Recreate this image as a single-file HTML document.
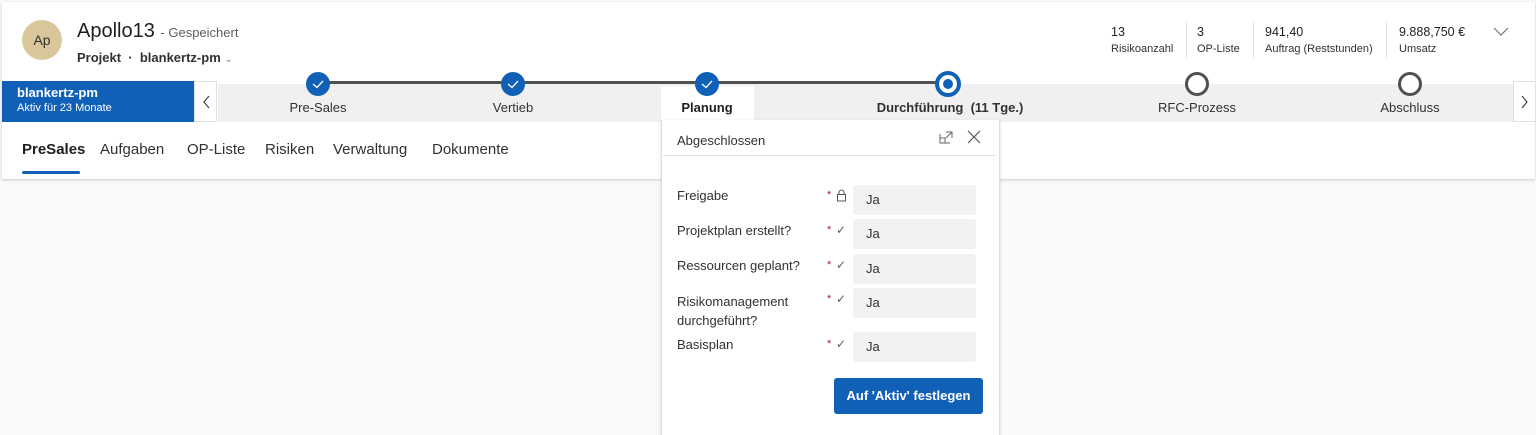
<html><head><style>
html,body{margin:0;width:1536px;height:435px;overflow:hidden}
body{background:#fafafa;font-family:"Liberation Sans",sans-serif;position:relative;color:#323130}
.a{position:absolute}
.card{left:2px;top:2px;width:1533px;height:177px;background:#fff;box-shadow:0 1px 3px rgba(0,0,0,.2)}
.lbl{font-size:13px;color:#323130;top:100px;transform:translateX(-50%);white-space:nowrap}
.c{width:20px;height:20px;border-radius:50%;top:72px;transform:translateX(-50%)}
.done{background:#1160b7;border:2px solid #1160b7;width:20px;height:20px}
.todo{background:#fff;border:3px solid #505050;width:18px;height:18px}
.tab{top:141px;font-size:15px;color:#323130}
.st{top:24px;font-size:11px;line-height:17px;white-space:nowrap}
.st b{font-weight:normal;font-size:12.5px;color:#201f1e}
.sep{top:22px;width:1px;height:36px;background:#e1e1e1}
.fl{left:677px;font-size:13px;color:#323130}
.in{left:853px;width:123px;height:30px;background:#f3f2f1;border-radius:3px;font-size:13px;line-height:30px;text-indent:13px}
.star{left:827px;color:#a4262c;font-size:11px}
.ck{left:836px;font-size:12px;color:#605e5c}
</style></head><body>
<div class="a card"></div>
<div class="a" style="left:22px;top:20px;width:40px;height:40px;border-radius:50%;background:#d9c69a;font-size:14px;line-height:40px;text-align:center;color:#323130">Ap</div>
<div class="a" style="left:77px;top:20px;font-size:20px;color:#201f1e">Apollo13 <span style="font-size:13px;color:#605e5c">- Gespeichert</span></div>
<div class="a" style="left:77px;top:50px;font-size:13px;font-weight:bold;color:#323130">Projekt &nbsp;·&nbsp; blankertz-pm <span style="font-weight:normal;color:#888;font-size:10px">&#8964;</span></div>

<div class="a st" style="left:1111px"><b>13</b><br>Risikoanzahl</div>
<div class="a sep" style="left:1186px"></div>
<div class="a st" style="left:1197px"><b>3</b><br>OP-Liste</div>
<div class="a sep" style="left:1253px"></div>
<div class="a st" style="left:1265px"><b>941,40</b><br>Auftrag (Reststunden)</div>
<div class="a sep" style="left:1386px"></div>
<div class="a st" style="left:1399px"><b>9.888,750 €</b><br>Umsatz</div>
<svg class="a" style="left:1493px;top:27px" width="16" height="10"><path d="M1 1 L8 8 L15 1" fill="none" stroke="#777" stroke-width="1.2"/></svg>

<div class="a" style="left:218px;top:84px;width:1295px;height:38px;background:#f0f0f0"></div>
<div class="a" style="left:661px;top:86px;width:93px;height:36px;background:#fff"></div>
<div class="a" style="left:2px;top:81px;width:192px;height:41px;background:#1160b7;color:#fff"><div style="padding:4px 0 0 15px;font-size:13px;font-weight:bold">blankertz-pm</div><div style="padding:2px 0 0 15px;font-size:11px">Aktiv für 23 Monate</div></div>
<div class="a" style="left:194px;top:81px;width:23px;height:41px;background:#fff;border:1px solid #e1e1e1;box-sizing:border-box"><svg width="23" height="41"><path d="M14 14 L9 20 L14 26" fill="none" stroke="#444" stroke-width="1.2"/></svg></div>
<div class="a" style="left:1513px;top:81px;width:23px;height:41px;background:#fff;border:1px solid #e1e1e1;box-sizing:border-box"><svg width="23" height="41"><path d="M8 14 L13 20 L8 26" fill="none" stroke="#444" stroke-width="1.2"/></svg></div>
<div class="a" style="left:318px;top:81px;width:630px;height:3px;background:#505050"></div>

<div class="a c done" style="left:318px"><svg width="20" height="20"><path d="M5 10 L9 13.5 L15 7" fill="none" stroke="#fff" stroke-width="1.3"/></svg></div>
<div class="a c done" style="left:513px"><svg width="20" height="20"><path d="M5 10 L9 13.5 L15 7" fill="none" stroke="#fff" stroke-width="1.3"/></svg></div>
<div class="a c done" style="left:707px"><svg width="20" height="20"><path d="M5 10 L9 13.5 L15 7" fill="none" stroke="#fff" stroke-width="1.3"/></svg></div>
<div class="a c" style="left:948px;width:18px;height:18px;background:#fff;border:4px solid #1160b7;top:71px"><div style="margin:4px;width:10px;height:10px;border-radius:50%;background:#1160b7"></div></div>
<div class="a c todo" style="left:1197px"></div>
<div class="a c todo" style="left:1410px"></div>

<div class="a lbl" style="left:318px">Pre-Sales</div>
<div class="a lbl" style="left:513px">Vertieb</div>
<div class="a lbl" style="left:707px;font-weight:bold;color:#201f1e">Planung</div>
<div class="a lbl" style="left:950px;font-weight:bold;color:#323130">Durchführung &nbsp;(11 Tge.)</div>
<div class="a lbl" style="left:1197px">RFC-Prozess</div>
<div class="a lbl" style="left:1410px">Abschluss</div>

<div class="a tab" style="left:22px;font-weight:bold;color:#201f1e">PreSales</div>
<div class="a" style="left:22px;top:171px;width:58px;height:3px;background:#1160b7;border-radius:2px"></div>
<div class="a tab" style="left:100px">Aufgaben</div>
<div class="a tab" style="left:187px">OP-Liste</div>
<div class="a tab" style="left:265px">Risiken</div>
<div class="a tab" style="left:333px">Verwaltung</div>
<div class="a tab" style="left:432px">Dokumente</div>

<div class="a" style="left:661px;top:120px;width:337px;height:320px;background:#fff;border-left:1px solid #ddd;border-right:1px solid #ddd;box-shadow:0 1px 3px rgba(0,0,0,.15)"></div>
<div class="a" style="left:663px;top:155px;width:333px;height:1px;background:#e1e1e1"></div>
<div class="a" style="left:677px;top:133px;font-size:13px">Abgeschlossen</div>
<svg class="a" style="left:938px;top:130px" width="16" height="15"><path d="M2 4 V13 H12 M2 8 H7 V13 M8 2 H14 V8 M14 2 L8 8" fill="none" stroke="#666" stroke-width="1"/></svg>
<svg class="a" style="left:967px;top:130px" width="14" height="14"><path d="M1 1 L13 13 M13 1 L1 13" fill="none" stroke="#555" stroke-width="1.2"/></svg>

<div class="a fl" style="top:188px">Freigabe</div>
<div class="a star" style="top:189px">*</div>
<svg class="a" style="left:836px;top:189px" width="11" height="13"><rect x="1.5" y="5.5" width="8" height="6.5" fill="none" stroke="#555"/><path d="M3 5.5 V3.5 A2.5 2.5 0 0 1 8 3.5 V5.5" fill="none" stroke="#555"/></svg>
<div class="a in" style="top:185px">Ja</div>

<div class="a fl" style="top:223px">Projektplan erstellt?</div>
<div class="a star" style="top:224px">*</div><div class="a ck" style="top:223px">✓</div>
<div class="a in" style="top:219px">Ja</div>

<div class="a fl" style="top:258px">Ressourcen geplant?</div>
<div class="a star" style="top:259px">*</div><div class="a ck" style="top:258px">✓</div>
<div class="a in" style="top:254px">Ja</div>

<div class="a fl" style="top:292px;line-height:19px">Risikomanagement<br>durchgeführt?</div>
<div class="a star" style="top:293px">*</div><div class="a ck" style="top:292px">✓</div>
<div class="a in" style="top:288px">Ja</div>

<div class="a fl" style="top:337px">Basisplan</div>
<div class="a star" style="top:338px">*</div><div class="a ck" style="top:337px">✓</div>
<div class="a in" style="top:332px">Ja</div>

<div class="a" style="left:834px;top:378px;width:149px;height:36px;background:#1160b7;border-radius:3px;color:#fff;font-size:13px;font-weight:bold;line-height:36px;text-align:center">Auf 'Aktiv' festlegen</div>
</body></html>
